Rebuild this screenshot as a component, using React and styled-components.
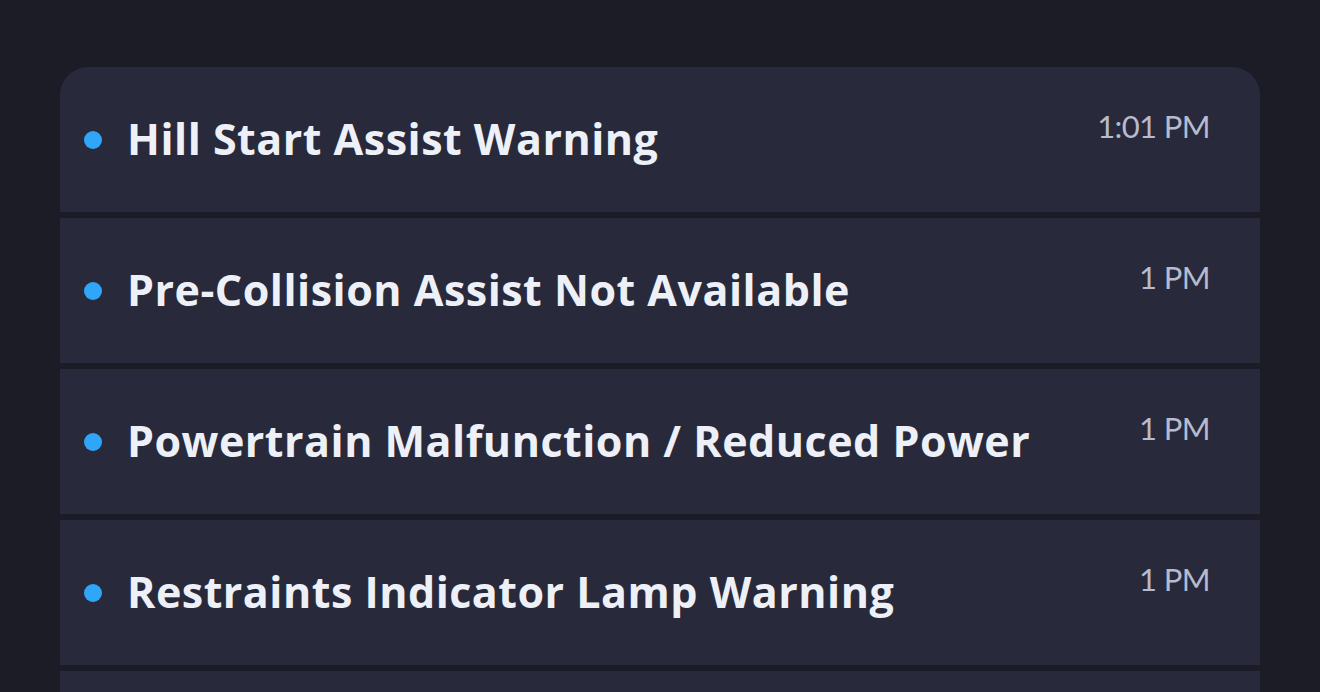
import React from "react";
import styled, { createGlobalStyle } from "styled-components";

const GlobalStyle = createGlobalStyle`
  html, body {
    margin: 0;
    padding: 0;
    background: #1b1c26;
    height: 100%;
    overflow: hidden;
  }
`;

const Page = styled.div`
  padding: 67px 60px 0;
  font-family: Lato, "Open Sans", sans-serif;
`;

const List = styled.ul`
  margin: 0;
  padding: 0;
  list-style: none;
  display: flex;
  flex-direction: column;
  gap: 6px;
  border-radius: 28px 28px 0 0;
  overflow: hidden;
`;

const Row = styled.li`
  height: 145px;
  box-sizing: border-box;
  background: #282a3b;
  display: flex;
  align-items: center;
  padding: 0 50px 0 24px;
`;

const Dot = styled.span`
  width: 18px;
  height: 18px;
  border-radius: 50%;
  background: #2fa6f7;
  flex-shrink: 0;
  margin-right: 25px;
`;

const Title = styled.div`
  flex: 1;
  color: #eef0f8;
  font-family: "Open Sans", Lato, sans-serif;
  font-size: 43px;
  font-weight: 700;
  letter-spacing: 0.5px;
  margin-top: -3px;
`;

const Time = styled.div`
  align-self: flex-start;
  margin-top: 40px;
  color: #b7bbcd;
  font-size: 31px;
  font-weight: 400;
  letter-spacing: -0.6px;
`;

const alerts = [
  { title: "Hill Start Assist Warning", time: "1:01 PM" },
  { title: "Pre-Collision Assist Not Available", time: "1 PM" },
  { title: "Powertrain Malfunction / Reduced Power", time: "1 PM" },
  { title: "Restraints Indicator Lamp Warning", time: "1 PM" },
  { title: "", time: "" },
];

const App = () => {
  return (
    <>
      <GlobalStyle />
      <Page>
        <List>
          {alerts.map((a, i) => (
            <Row key={i}>
              {a.title && <Dot />}
              <Title>{a.title}</Title>
              <Time>{a.time}</Time>
            </Row>
          ))}
        </List>
      </Page>
    </>
  );
};

export default App;
